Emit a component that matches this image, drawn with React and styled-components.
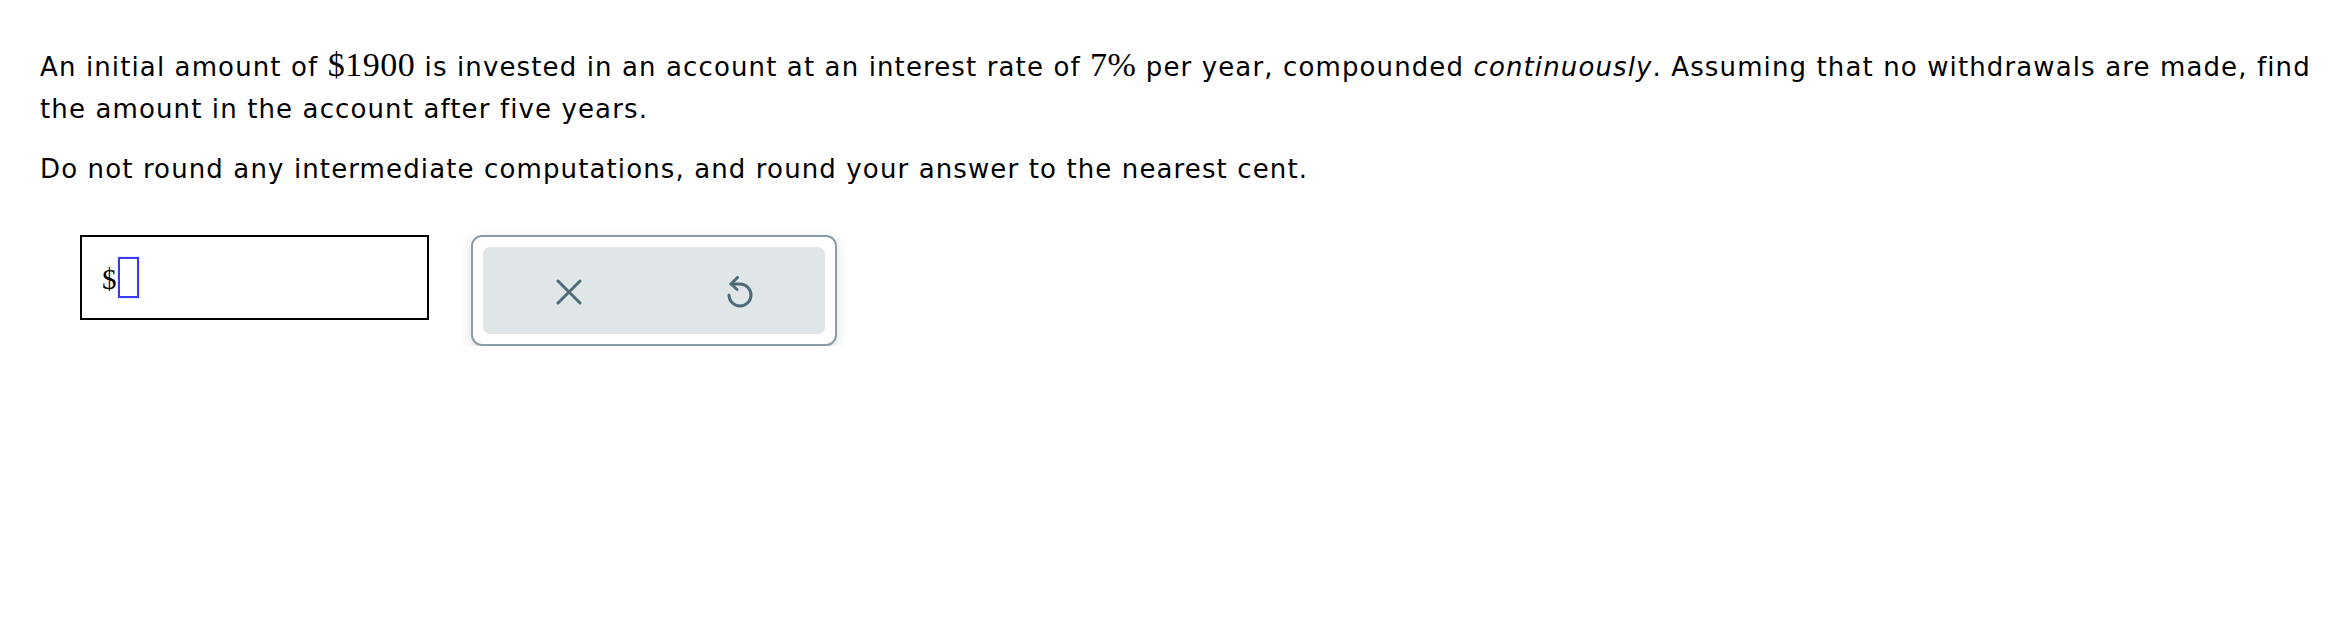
import React from 'react';
import styled, { createGlobalStyle } from 'styled-components';

const GlobalStyle = createGlobalStyle`
  html, body {
    margin: 0;
    padding: 0;
    background: #ffffff;
  }
  body {
    font-family: 'DejaVu Sans', Verdana, sans-serif;
    color: #000000;
  }
`;

const Page = styled.div`
  padding: 44px 18px 0 40px;
`;

const Paragraph = styled.p`
  margin: 0 0 18px;
  font-size: 26px;
  letter-spacing: 1.12px;
  line-height: 42px;
`;

const MathText = styled.span`
  font-family: 'Liberation Serif', 'Times New Roman', serif;
  font-size: 34px;
  letter-spacing: 0.5px;
`;

const AnswerRow = styled.div`
  display: flex;
  align-items: flex-start;
  gap: 42px;
  margin-top: 45px;
  padding-left: 80px;
`;

const AnswerBox = styled.div`
  box-sizing: border-box;
  width: 349px;
  height: 85px;
  border: 2px solid #000000;
  display: flex;
  align-items: center;
  padding-left: 20px;
`;

const Dollar = styled.span`
  font-family: 'Liberation Serif', 'Times New Roman', serif;
  font-size: 29px;
  line-height: 1;
  padding-top: 3px;
`;

const Blank = styled.span`
  box-sizing: border-box;
  display: inline-block;
  width: 21px;
  height: 41px;
  border: 2px solid #3a3af5;
  box-shadow: 0 0 1px rgba(58, 58, 245, 0.6);
  margin-left: 1px;
`;

const ToolPanel = styled.div`
  box-sizing: border-box;
  width: 366px;
  height: 111px;
  border: 2px solid #8b9ea7;
  border-radius: 11px;
  background: #ffffff;
  padding: 10px;
  box-shadow: 0 4px 12px rgba(30, 50, 60, 0.16);
`;

const ToolGroup = styled.div`
  height: 100%;
  display: grid;
  grid-template-columns: 1fr 1fr;
  background: #e0e5e8;
  border-radius: 7px;
`;

const ToolButton = styled.button`
  border: none;
  background: transparent;
  padding: 0;
  display: flex;
  align-items: center;
  justify-content: center;
  color: #4e6b78;
  cursor: pointer;
  padding-top: ${({ nudge }) => nudge || 0}px;
`;

const CloseIcon = () => (
  <svg width="26" height="26" viewBox="0 0 26 26" fill="none">
    <path d="M2 2 L24 24 M24 2 L2 24" stroke="currentColor" strokeWidth="3" strokeLinecap="round" />
  </svg>
);

const ResetIcon = () => (
  <svg width="30" height="32" viewBox="0 0 30 32" fill="none">
    <path
      d="M6 8 H15 A11 11 0 1 1 4 19"
      stroke="currentColor"
      strokeWidth="3"
      strokeLinecap="round"
      strokeLinejoin="round"
    />
    <path
      d="M12.5 1.5 L6 8 L12 13.5"
      stroke="currentColor"
      strokeWidth="3"
      strokeLinecap="round"
      strokeLinejoin="round"
    />
  </svg>
);

const App = () => (
  <>
    <GlobalStyle />
    <Page>
      <Paragraph>
        An initial amount of <MathText>$1900</MathText> is invested in an account at an interest
        rate of <MathText>7%</MathText> per year, compounded <em>continuously</em>. Assuming that no
        withdrawals are made, find the amount in the account after five years.
      </Paragraph>
      <Paragraph>
        Do not round any intermediate computations, and round your answer to the nearest cent.
      </Paragraph>
    </Page>
    <AnswerRow>
      <AnswerBox>
        <Dollar>$</Dollar>
        <Blank />
      </AnswerBox>
      <ToolPanel>
        <ToolGroup>
          <ToolButton aria-label="Clear" nudge={2}>
            <CloseIcon />
          </ToolButton>
          <ToolButton aria-label="Reset" nudge={3}>
            <ResetIcon />
          </ToolButton>
        </ToolGroup>
      </ToolPanel>
    </AnswerRow>
  </>
);

export default App;
